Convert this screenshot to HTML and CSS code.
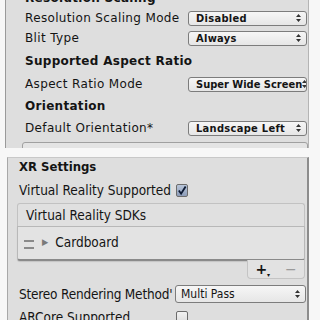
FILE: index.html
```html
<!DOCTYPE html>
<html lang="en">
<head>
  <meta charset="UTF-8">
  <meta name="viewport" content="width=device-width, initial-scale=1.0">
  <title>Player Settings</title>
  <link rel="stylesheet" href="styles.css">
</head>
<body>
  <!-- upper crop: resolution / orientation -->
  <div class="panel top-panel">
    <div class="inner">
      <div class="head head-first">Resolution Scaling</div>
      <div class="row">
        <span class="label">Resolution Scaling Mode</span>
        <div class="dropdown"><span>Disabled</span><svg class="arrows" width="5" height="8" viewBox="0 0 5 8"><path d="M2.5 0 L5 3 L0 3 Z M2.5 8 L5 5 L0 5 Z" fill="#333"/></svg></div>
      </div>
      <div class="row">
        <span class="label">Blit Type</span>
        <div class="dropdown"><span>Always</span><svg class="arrows" width="5" height="8" viewBox="0 0 5 8"><path d="M2.5 0 L5 3 L0 3 Z M2.5 8 L5 5 L0 5 Z" fill="#333"/></svg></div>
      </div>
      <div class="head head-mid">Supported Aspect Ratio</div>
      <div class="row">
        <span class="label">Aspect Ratio Mode</span>
        <div class="dropdown"><span class="tight">Super Wide Screen</span><svg class="arrows" width="5" height="8" viewBox="0 0 5 8"><path d="M2.5 0 L5 3 L0 3 Z M2.5 8 L5 5 L0 5 Z" fill="#333"/></svg></div>
      </div>
      <div class="head head-last">Orientation</div>
      <div class="row">
        <span class="label">Default Orientation*</span>
        <div class="dropdown"><span>Landscape Left</span><svg class="arrows" width="5" height="8" viewBox="0 0 5 8"><path d="M2.5 0 L5 3 L0 3 Z M2.5 8 L5 5 L0 5 Z" fill="#333"/></svg></div>
      </div>
      <div class="row">
        <div class="wide-box">Allowed Orientations for Auto Rotation</div>
      </div>
    </div>
  </div>

  <!-- lower crop: XR settings -->
  <div class="panel xr-panel">
    <div class="xr-head">XR Settings</div>
    <div class="xr-row">
      <span>Virtual Reality Supported</span>
      <span class="checkbox checked"><svg width="11" height="11" viewBox="0 0 11 11"><path d="M2 5.5 L4.5 9 L9.5 1" fill="none" stroke="#0d1a33" stroke-width="2"/></svg></span>
    </div>
    <div class="sdk-list">
      <div class="list-head">Virtual Reality SDKs</div>
      <div class="list-body">
        <div class="list-item">
          <span class="handle"></span>
          <span class="fold">&#9654;</span>
          <span>Cardboard</span>
        </div>
      </div>
      <div class="list-foot">
        <div class="foot-tab"><span class="plus">+<small>&#9662;</small></span><span class="minus">&minus;</span></div>
      </div>
    </div>
    <div class="xr-row stereo">
      <span class="xr-label">Stereo Rendering Method'</span>
      <div class="dropdown xr-drop"><span>Multi Pass</span><svg class="arrows" width="5" height="8" viewBox="0 0 5 8"><path d="M2.5 0 L5 3 L0 3 Z M2.5 8 L5 5 L0 5 Z" fill="#333"/></svg></div>
    </div>
    <div class="xr-row arcore">
      <span class="xr-label">ARCore Supported</span>
      <span class="checkbox"></span>
    </div>
  </div>
</body>
</html>
```

FILE: styles.css
```css
body {
  margin: 0;
  padding: 0;
  background-color: #f7f7f7;
  color: #141414;
  font-family: "DejaVu Sans", sans-serif;
  width: 320px;
  height: 320px;
  overflow: hidden;
}
.panel {
  background-color: #dedede;
  box-sizing: border-box;
}
.top-panel {
  margin-left: 5px;
  width: 304px;
  height: 148px;
  overflow: hidden;
  border-left: 1px solid #9a9a9a;
  border-right: 1px solid #b4b4b4;
}
.top-panel .inner {
  margin-top: -12px;
  padding-left: 19px;
}
.head {
  display: flex;
  align-items: center;
  font-weight: bold;
  font-size: 12px;
  letter-spacing: 0.3px;
}
.head-first {
  height: 20px;
}
.head-mid {
  height: 26px;
}
.head-last {
  height: 24px;
}
.row {
  display: flex;
  align-items: center;
  height: 20px;
  font-size: 12px;
  letter-spacing: 0.35px;
}
.label {
  width: 163px;
  white-space: nowrap;
}
.dropdown {
  display: flex;
  align-items: center;
  justify-content: space-between;
  box-sizing: border-box;
  width: 119px;
  height: 15px;
  padding: 0 5px 0 7px;
  border: 1px solid #7c7c7c;
  border-radius: 3px;
  background: linear-gradient(#f6f6f6, #e6e6e6);
  font-family: "DejaVu Sans Condensed", "DejaVu Sans", sans-serif;
  font-size: 11px;
  font-weight: bold;
  letter-spacing: 0.3px;
  white-space: nowrap;
  overflow: hidden;
}
.dropdown .tight {
  letter-spacing: 0;
}
.arrows {
  flex-shrink: 0;
}
.wide-box {
  box-sizing: border-box;
  margin-left: -3px;
  margin-top: 4px;
  width: 286px;
  height: 16px;
  border: 1px solid #a0a0a0;
  border-radius: 3px;
  background: #e4e4e4;
  padding-left: 70px;
  padding-top: 3px;
  font-size: 11px;
  font-weight: bold;
  color: #333;
}
.xr-panel {
  margin-top: 9px;
  margin-left: 7px;
  width: 302px;
  height: 170px;
  border-left: 1px solid #a8a8a8;
  border-right: 2px solid #8c8c8c;
  border-top: 1px solid #c8c8c8;
  padding-left: 11px;
  font-family: "DejaVu Sans Condensed", "DejaVu Sans", sans-serif;
  font-size: 13.5px;
}
.xr-head {
  height: 16px;
  display: flex;
  align-items: center;
  font-weight: bold;
  font-size: 13px;
}
.xr-row {
  display: flex;
  align-items: center;
  height: 20px;
  margin-top: 6px;
  white-space: nowrap;
}
.xr-row > span:first-child {
  width: 157px;
}
.checkbox {
  display: inline-flex;
  align-items: center;
  justify-content: center;
  box-sizing: border-box;
  width: 12px;
  height: 13px;
  border: 1px solid #6c6c6c;
  border-radius: 2px;
  background: linear-gradient(#f2f2f2, #dcdcdc);
}
.checkbox.checked {
  background: linear-gradient(#b9c6da, #8c9cb8);
}
.sdk-list {
  margin-left: -2px;
  margin-top: 3px;
  width: 288px;
}
.list-head {
  box-sizing: border-box;
  height: 23px;
  padding-left: 8px;
  display: flex;
  align-items: center;
  border: 1px solid #c2c2c2;
  border-bottom: none;
  border-radius: 3px 3px 0 0;
  background: #e0e0e0;
}
.list-body {
  box-sizing: border-box;
  height: 35px;
  border: 1px solid #b8b8b8;
  border-bottom: 2px solid #8a8a8a;
  border-radius: 0 0 3px 3px;
  background: #e3e3e3;
  box-shadow: 0 1px 1px rgba(0, 0, 0, 0.12);
  display: flex;
  align-items: center;
}
.list-item {
  display: flex;
  align-items: center;
  padding-left: 6px;
  margin-top: -2px;
}
.handle {
  width: 10px;
  height: 5px;
  border-top: 2px solid #8a8a8a;
  border-bottom: 2px solid #8a8a8a;
  margin-top: 4px;
  margin-right: 8px;
}
.fold {
  font-size: 9px;
  color: #7a7a7a;
  margin-right: 7px;
}
.list-foot {
  display: flex;
  justify-content: flex-end;
}
.foot-tab {
  box-sizing: border-box;
  width: 58px;
  height: 19px;
  margin-top: -1px;
  border: 1px solid #c4c4c4;
  border-top: none;
  border-radius: 0 0 4px 4px;
  background: #e2e2e2;
  display: flex;
  align-items: center;
  justify-content: space-around;
  font-family: "DejaVu Sans", sans-serif;
  font-size: 14px;
  font-weight: bold;
}
.foot-tab small {
  font-size: 6px;
  vertical-align: -3px;
}
.minus {
  color: #9a9a9a;
  font-weight: normal;
}
.stereo {
  margin-top: 5px;
}
.xr-row.stereo > span:first-child {
  width: 156px;
  letter-spacing: -0.2px;
}
.arcore {
  margin-top: 3px;
}
.xr-drop {
  width: 131px;
  height: 18px;
  font-size: 12px;
  font-weight: normal;
  letter-spacing: 0;
  padding-left: 5px;
}
```
